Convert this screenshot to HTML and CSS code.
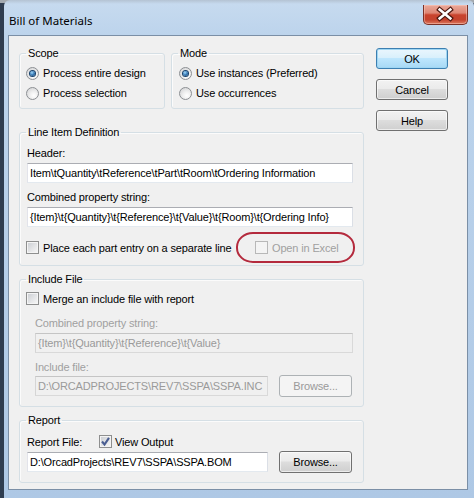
FILE: index.html
```html
<!DOCTYPE html>
<html>
<head>
<meta charset="utf-8">
<title>Bill of Materials</title>
<link rel="stylesheet" href="styles.css">
</head>
<body>
<div class="window">
  <div class="titlebar">
    <span class="title">Bill of Materials</span>
    <div class="close">
      <svg width="45" height="20" viewBox="0 0 45 20">
        <path d="M17 5.5 L28 14.5 M28 5.5 L17 14.5" stroke="#4b1710" stroke-width="5" stroke-linecap="square" fill="none"/>
        <path d="M17 5.5 L28 14.5 M28 5.5 L17 14.5" stroke="#ffffff" stroke-width="2.6" stroke-linecap="square" fill="none"/>
      </svg>
    </div>
  </div>
  <div class="client">
    <div class="main">
      <div class="toprow">
        <fieldset class="group scope">
          <legend>Scope</legend>
          <div class="opts">
            <div class="opt"><span class="radio on"></span><span>Process entire design</span></div>
            <div class="opt"><span class="radio"></span><span>Process selection</span></div>
          </div>
        </fieldset>
        <fieldset class="group mode">
          <legend>Mode</legend>
          <div class="opts mode-opts">
            <div class="opt"><span class="radio on"></span><span>Use instances (Preferred)</span></div>
            <div class="opt"><span class="radio"></span><span>Use occurrences</span></div>
          </div>
        </fieldset>
      </div>

      <fieldset class="group lineitem">
        <legend>Line Item Definition</legend>
        <div class="body li-body">
          <div class="lbl">Header:</div>
          <div class="input">Item\tQuantity\tReference\tPart\tRoom\tOrdering Information</div>
          <div class="lbl gap8">Combined property string:</div>
          <div class="input">{Item}\t{Quantity}\t{Reference}\t{Value}\t{Room}\t{Ordering Info}</div>
          <div class="cbrow li-cbrow">
            <div class="cbitem first"><span class="cb"></span><span>Place each part entry on a separate line</span></div>
            <div class="cbitem excel disabled"><span class="cb dis"></span><span>Open in Excel</span><span class="mark"></span></div>
          </div>
        </div>
      </fieldset>

      <fieldset class="group include">
        <legend>Include File</legend>
        <div class="body inc-body">
          <div class="cbrow">
            <div class="cbitem"><span class="cb"></span><span>Merge an include file with report</span></div>
          </div>
          <div class="indent">
            <div class="lbl disabled gap12">Combined property string:</div>
            <div class="input dis">{Item}\t{Quantity}\t{Reference}\t{Value}</div>
            <div class="lbl disabled gap8">Include file:</div>
            <div class="filerow">
              <div class="input dis inc-file">D:\ORCADPROJECTS\REV7\SSPA\SSPA.INC</div>
              <div class="btn browse disabled">Browse...</div>
            </div>
          </div>
        </div>
      </fieldset>

      <fieldset class="group report">
        <legend>Report</legend>
        <div class="body rep-body">
          <div class="reprow">
            <span class="replbl">Report File:</span>
            <div class="cbitem view"><span class="cb on"><svg width="11" height="11" viewBox="0 0 11 11"><path d="M2 5.5 L4.5 8.5 L9 1.8" stroke="#4a5e92" stroke-width="2.1" fill="none"/></svg></span><span>View Output</span></div>
          </div>
          <div class="filerow">
            <div class="input rep-file">D:\OrcadProjects\REV7\SSPA\SSPA.BOM</div>
            <div class="btn browse">Browse...</div>
          </div>
        </div>
      </fieldset>
    </div>

    <div class="buttons">
      <div class="btn default">OK</div>
      <div class="btn">Cancel</div>
      <div class="btn">Help</div>
    </div>
  </div>
</div>
</body>
</html>
```

FILE: styles.css
```css
html, body {
  margin: 0;
  padding: 0;
}
body {
  width: 474px;
  height: 498px;
  overflow: hidden;
  background: linear-gradient(#a4aab0 0, #a4aab0 3px, #2f3d50 3px);
  font-family: "Liberation Sans", Arial, sans-serif;
  font-size: 11px;
  letter-spacing: -0.15px;
  color: #000;
}
.window {
  margin-left: 4px;
  width: 470px;
  height: 498px;
  border-radius: 6px 6px 0 0;
  background: linear-gradient(#b4c3d3 0, #c6daef 4px, #bdd4ec 34px, #aec8e5 100%);
  display: flex;
  flex-direction: column;
}
.titlebar {
  height: 35px;
  flex: none;
  display: flex;
  justify-content: space-between;
  align-items: flex-start;
  padding-left: 5px;
  box-sizing: border-box;
}
.title {
  margin-top: 13px;
  font-family: "Noto Sans", "Open Sans", sans-serif;
  font-size: 11.5px;
  line-height: 16px;
  letter-spacing: 0;
  color: #000;
}
.close {
  margin-top: 5px;
  margin-right: 6px;
  width: 45px;
  height: 20px;
  box-sizing: border-box;
  border: 1px solid #7a3127;
  border-top: none;
  border-radius: 0 0 5px 5px;
  background: linear-gradient(#e9a99a 0%, #de8674 42%, #c9432d 52%, #c4432e 78%, #dd7a60 100%);
  box-shadow: inset 0 0 0 1px rgba(255, 210, 200, 0.45);
  display: flex;
}
.close svg {
  display: block;
  margin-left: -1px;
  margin-top: -1px;
}
.client {
  margin-left: 4px;
  width: 460px;
  height: 455px;
  flex: none;
  box-sizing: border-box;
  border: 1px solid #7b8fa6;
  background: #f0f0f0;
  display: flex;
  align-items: flex-start;
}
.main {
  margin-left: 10px;
  padding-top: 11px;
  width: 345px;
  flex: none;
}
.toprow {
  display: flex;
  gap: 6px;
}
fieldset.group {
  margin: 0;
  padding: 0;
  border: 1px solid #d5dfe5;
  border-radius: 3px;
  min-width: 0;
  box-shadow: inset 1px 1px 0 #fbfbfb;
}
legend {
  margin-left: 6px;
  padding: 0 2px;
  line-height: 13px;
  height: 13px;
}
fieldset.scope {
  width: 146px;
  box-sizing: border-box;
}
fieldset.mode {
  width: 193px;
  box-sizing: border-box;
}
.opts {
  margin-top: 3px;
  padding: 0 0 5px 6px;
}
.mode-opts {
  padding-left: 7px;
}
.opt {
  display: flex;
  align-items: center;
  gap: 4px;
  height: 20px;
}
.radio {
  width: 13px;
  height: 13px;
  flex: none;
  box-sizing: border-box;
  border-radius: 50%;
  border: 1px solid #8c8f93;
  background: radial-gradient(circle at 62% 68%, #ffffff 0, #f1f1f1 35%, #cfd0d2 95%);
  display: grid;
  place-items: center;
}
.radio.on::after {
  content: "";
  width: 5px;
  height: 5px;
  border-radius: 50%;
  background: radial-gradient(circle at 40% 35%, #a6dbfa 0, #3b80bd 45%, #0d3763 100%);
  box-shadow: 0 0 0 1px #17426d;
}
fieldset.lineitem {
  margin-top: 17px;
}
.body {
  padding: 8px 10px 11px 7px;
}
.lbl {
  height: 13px;
  line-height: 13px;
}
.gap8 {
  margin-top: 8px;
}
.gap12 {
  margin-top: 12px;
}
.disabled {
  color: #a0a0a0;
}
.input {
  margin-top: 3px;
  height: 20px;
  box-sizing: border-box;
  border: 1px solid #abadb3;
  border-color: #abadb3 #dbdfe6 #e3e9ef #e2e3ea;
  background: #fff;
  padding-left: 2px;
  line-height: 18px;
  white-space: nowrap;
  overflow: hidden;
}
.input.dis {
  background: #f0f0f0;
  color: #9a9a9a;
  border-color: #c5c5c5 #d9d9d9 #d9d9d9 #d5d5d5;
}
.cbrow {
  display: flex;
  align-items: center;
  height: 13px;
  margin-left: -1px;
}
.li-cbrow {
  margin-top: 14px;
}
.cbitem {
  display: flex;
  align-items: center;
  gap: 4px;
}
.cbitem.first {
  width: 229px;
  flex: none;
}
.excel {
  position: relative;
}
.mark {
  position: absolute;
  left: -19px;
  top: -9px;
  width: 119px;
  height: 31px;
  box-sizing: border-box;
  border: 2px solid #b42a3d;
  border-radius: 17px / 15px;
}
.cb {
  width: 13px;
  height: 13px;
  flex: none;
  box-sizing: border-box;
  border: 1px solid #8e8f8f;
  background: linear-gradient(135deg, #c9ccd1 0%, #e4e5e7 55%, #f8f8f8 100%);
  box-shadow: inset 0 0 0 1px #f4f4f4;
  display: grid;
  place-items: center;
}
.cb.dis {
  border-color: #b8b8b8;
  background: #f4f4f4;
  box-shadow: none;
}
.cb.on svg {
  display: block;
}
fieldset.include {
  margin-top: 7px;
}
.inc-body {
  padding: 6px 10px 9px 7px;
}
.indent {
  padding-left: 8px;
}
.filerow {
  display: flex;
  align-items: center;
  height: 22px;
  margin-top: 1px;
  gap: 11px;
}
.filerow .input {
  margin-top: 0;
}
.inc-file {
  width: 233px;
  flex: none;
}
fieldset.report {
  margin-top: 7px;
}
.rep-body {
  padding: 8px 10px 9px 7px;
}
.reprow {
  display: flex;
  align-items: center;
  height: 13px;
}
.replbl {
  width: 72px;
  flex: none;
}
.view {
  gap: 3px;
}
.rep-body .filerow {
  margin-top: 3px;
}
.rep-file {
  width: 241px;
  flex: none;
}
.buttons {
  margin-left: 12px;
  padding-top: 12px;
  display: flex;
  flex-direction: column;
  gap: 10px;
}
.btn {
  width: 72px;
  height: 21px;
  box-sizing: border-box;
  border: 1px solid #707070;
  border-radius: 3px;
  background: linear-gradient(#f2f2f2 0%, #ebebeb 45%, #dddddd 50%, #cfcfcf 100%);
  box-shadow: inset 0 0 0 1px rgba(255, 255, 255, 0.6);
  display: flex;
  align-items: center;
  justify-content: center;
  flex: none;
}
.btn.default {
  border-color: #3c7fb1;
  background: linear-gradient(#eaf6fd 0%, #d9f0fc 45%, #bee6fd 50%, #a7d9f5 100%);
  box-shadow: inset 0 0 0 1px #9fd6f3;
}
.btn.browse {
  width: 73px;
  height: 22px;
}
.btn.disabled {
  border-color: #adb2b5;
  background: #f4f4f4;
  box-shadow: none;
  color: #9a9a9a;
}
```
